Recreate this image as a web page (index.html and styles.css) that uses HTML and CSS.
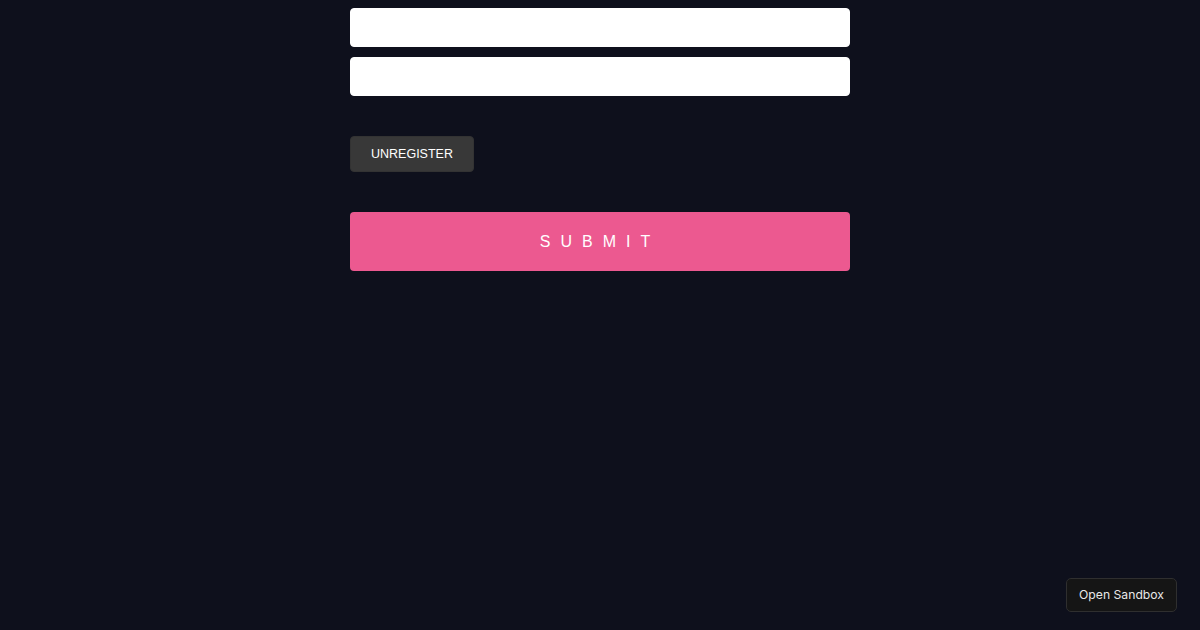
FILE: index.html
```html
<!DOCTYPE html>
<html lang="en">
<head>
<meta charset="utf-8">
<title>Form</title>
<link rel="stylesheet" href="styles.css">
</head>
<body>
<div class="app">
  <form class="form">
    <input class="field" type="text" name="firstName">
    <input class="field" type="text" name="lastName">
    <button class="btn-secondary" type="button">Unregister</button>
    <button class="btn-submit" type="submit">Submit</button>
  </form>
</div>
<a class="sandbox-link" href="#">Open Sandbox</a>
</body>
</html>
```
FILE: styles.css
```css
html, body {
  background: #0e101c;
}
body {
  margin: 8px;
  font-family: "Liberation Sans", Arial, sans-serif;
  color: #fff;
}
.app {
  max-width: 500px;
  margin: 0 auto;
}
.form {
  margin: 0;
}
.field {
  display: block;
  box-sizing: border-box;
  width: 100%;
  border-radius: 4px;
  border: 1px solid #fff;
  background: #fff;
  padding: 10px 15px;
  margin: 0 0 10px;
  font-size: 14px;
  line-height: 17px;
  font-family: "Liberation Sans", Arial, sans-serif;
}
.btn-secondary {
  display: block;
  margin: 40px 0 0;
  padding: 10px 20px;
  border: 1px solid #333;
  border-radius: 4px;
  background: #383838;
  color: #fff;
  font-family: "Liberation Sans", Arial, sans-serif;
  font-size: 12.5px;
  line-height: 14px;
  text-transform: uppercase;
  height: 36px;
  box-sizing: border-box;
}
.btn-submit {
  display: block;
  width: 100%;
  margin: 40px 0 0;
  padding: 20px;
  border: none;
  border-radius: 4px;
  background: #ec5990;
  color: #fff;
  font-family: "Liberation Sans", Arial, sans-serif;
  font-size: 16px;
  line-height: 19px;
  font-weight: 300;
  letter-spacing: 10px;
  text-transform: uppercase;
}
.sandbox-link {
  position: fixed;
  right: 23px;
  bottom: 18px;
  box-sizing: border-box;
  height: 34px;
  padding: 0 12px 1px;
  display: flex;
  align-items: center;
  background: #151515;
  border: 1px solid #2f2f2f;
  border-radius: 5px;
  color: #e8e8e8;
  font-family: Inter, "Liberation Sans", sans-serif;
  font-size: 12.2px;
  text-decoration: none;
}
```
